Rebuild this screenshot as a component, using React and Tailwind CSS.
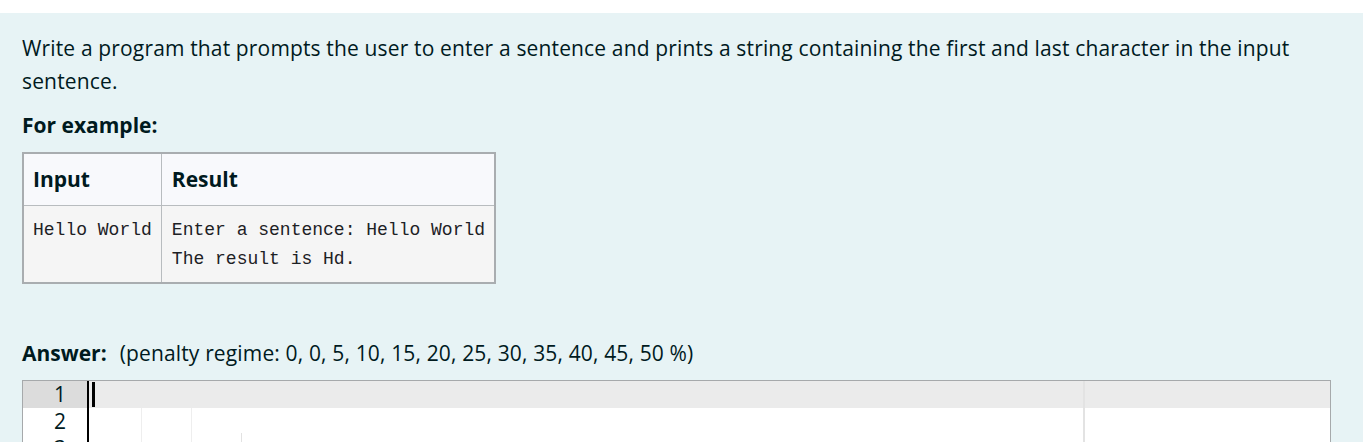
import React from 'react';

const sans = { fontFamily: '"Open Sans", "Noto Sans", sans-serif' };
const mono = { fontFamily: '"Liberation Mono", "DejaVu Sans Mono", monospace' };

const App = () => {
  return (
    <div className="bg-white h-screen pt-[13px] overflow-hidden" style={sans}>
      <div className="bg-[#e7f3f5] text-[#001a1e] pl-[22px] pr-[33px] pt-[19px] pb-10">
        <p className="text-[21px] leading-[33px] tracking-[0.15px] w-[1300px]">
          Write a program that prompts the user to enter a sentence and prints a string containing the first and last character in the input sentence.
        </p>
        <p className="text-[21px] font-bold leading-[33px] mt-[11px]">For example:</p>
        <table className="mt-[10px] border-collapse border-2 border-[#a9adb0]">
          <thead>
            <tr className="bg-[#f8f9fc]">
              <th className="h-[52px] text-left pl-[9px] pr-[9px] border border-[#b8bcbf] text-[21px] font-bold">Input</th>
              <th className="h-[52px] text-left pl-[10px] pr-[9px] border border-[#b8bcbf] text-[21px] font-bold">Result</th>
            </tr>
          </thead>
          <tbody>
            <tr className="bg-[#f5f5f5] align-top text-[18px] leading-[29px] text-[#1d2125]" style={mono}>
              <td className="pl-[9px] pr-[9px] pt-[10px] pb-[8px] border border-[#b8bcbf] whitespace-pre">Hello World</td>
              <td className="pl-[10px] pr-[9px] pt-[10px] pb-[8px] border border-[#b8bcbf] whitespace-pre">{'Enter a sentence: Hello World\nThe result is Hd.'}</td>
            </tr>
          </tbody>
        </table>
        <div className="mt-[53px] flex items-baseline gap-[13px] text-[21px] leading-[33px]">
          <span className="font-bold">Answer:</span>
          <span className="tracking-[0.15px]">(penalty regime: 0, 0, 5, 10, 15, 20, 25, 30, 35, 40, 45, 50 %)</span>
        </div>
        <div className="mt-[10px] w-[1309px] border border-[#a6a9ab] bg-white flex text-[21px]">
          <div className="w-[66px] border-r-2 border-black shrink-0">
            <div className="h-[27px] bg-[#dcdcdc] text-right pr-[21px] leading-[27px]">1</div>
            <div className="h-[27px] text-right pr-[21px] leading-[27px]">2</div>
            <div className="h-[27px] text-right pr-[21px] leading-[27px]">3</div>
          </div>
          <div className="flex-1 relative">
            <div className="h-[27px] bg-[#ebebeb] flex items-center pl-[3px]">
              <div className="w-[3px] h-[25px] bg-black"></div>
            </div>
            <div className="h-[54px]"></div>
            <div className="absolute top-[27px] left-[52px] w-px h-[60px] bg-[#eeeeee]"></div>
            <div className="absolute top-[27px] left-[102px] w-px h-[60px] bg-[#eeeeee]"></div>
            <div className="absolute top-[52px] left-[152px] w-px h-[60px] bg-[#e2e2e2]"></div>
            <div className="absolute top-0 left-[994px] w-[2px] h-full bg-[#e3e3e3]"></div>
          </div>
        </div>
      </div>
    </div>
  );
};

export default App;
